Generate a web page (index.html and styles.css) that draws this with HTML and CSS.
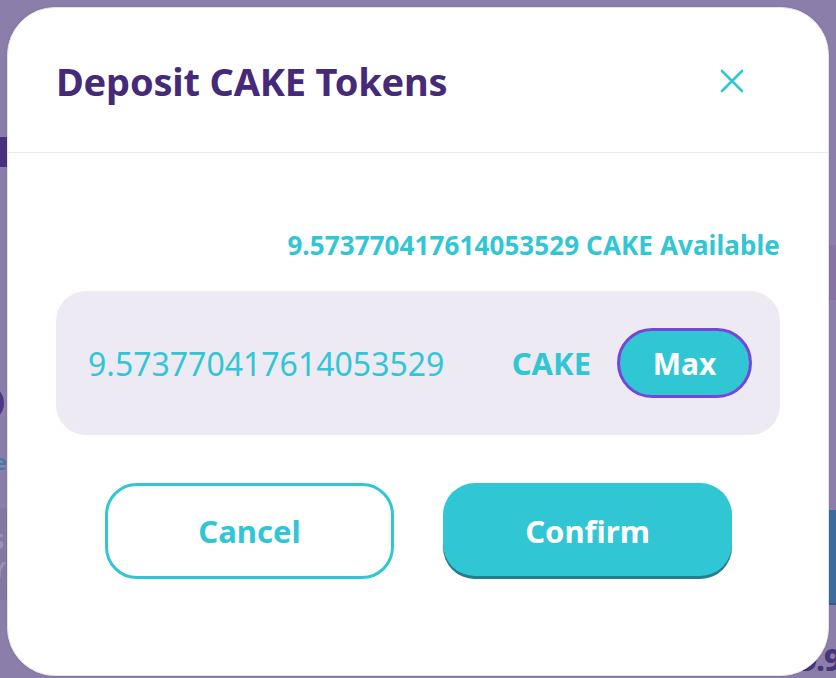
FILE: index.html
```html
<!DOCTYPE html>
<html lang="en">
<head>
<meta charset="utf-8">
<title>Deposit CAKE Tokens</title>
<link rel="stylesheet" href="styles.css">
</head>
<body>
<div class="backdrop" aria-hidden="true">
  <div class="bg-band-left"></div>
  <div class="bg-dot-left"></div>
  <div class="bg-e-left">e</div>
  <div class="bg-card-left"><span>S</span><span>Y</span></div>
  <div class="bg-band-right"></div>
  <div class="bg-card-right"></div>
  <div class="bg-num-right">9.9</div>
</div>
<div class="modal">
  <div class="modal-header">
    <h2 class="modal-title">Deposit CAKE Tokens</h2>
    <button class="close-btn" aria-label="Close">
      <svg width="24" height="24" viewBox="0 0 24 24"><path d="M2 2 L22 22 M22 2 L2 22" stroke="#31c6d4" stroke-width="2.6" stroke-linecap="round" fill="none"/></svg>
    </button>
  </div>
  <div class="modal-body">
    <div class="available">9.573770417614053529 CAKE Available</div>
    <div class="input-box">
      <span class="input-value">9.573770417614053529</span>
      <span class="input-unit">CAKE</span>
      <button class="max-btn">Max</button>
    </div>
    <div class="actions">
      <button class="btn btn-outline">Cancel</button>
      <button class="btn btn-solid">Confirm</button>
    </div>
  </div>
</div>
</body>
</html>
```
FILE: styles.css
```css
* { box-sizing: border-box; }
html, body { margin: 0; height: 100%; }
body {
  background: #8c7eab;
  font-family: "Noto Sans", "Open Sans", sans-serif;
  padding: 7px 7px 0 7px;
  position: relative;
  overflow: hidden;
}
.backdrop { position: absolute; inset: 0; z-index: 0; }
.bg-band-left { position: absolute; left: 0; top: 137px; width: 10px; height: 30px; background: #48307e; }
.bg-dot-left { position: absolute; left: -30px; top: 385px; width: 34px; height: 36px; border-radius: 50%; background: #4b3786; }
.bg-e-left { position: absolute; left: -6px; top: 446px; font-size: 22px; line-height: 30px; color: #3f79aa; font-weight: 600; }
.bg-card-left { position: absolute; left: 0; top: 508px; width: 10px; height: 92px; background: #8478a0; color: #9b92b3; font-size: 22px; font-weight: 700; display: flex; flex-direction: column; padding-top: 18px; line-height: 28px; }
.bg-card-left span { margin-left: -8px; }
.bg-band-right { position: absolute; right: 0; top: 245px; width: 10px; height: 55px; background: #8774a4; }
.bg-card-right { position: absolute; right: 0; top: 510px; width: 12px; height: 95px; background: #3d6b9c; border-bottom: 2px solid #36598a; }
.bg-num-right { position: absolute; left: 800px; top: 640px; font-size: 30px; line-height: 40px; font-weight: 800; color: #473579; letter-spacing: -1px; }

.modal {
  position: relative;
  z-index: 1;
  width: 822px;
  height: 669px;
  background: #fff;
  border: 1px solid #e4e2ea;
  border-radius: 48px;
  box-shadow: 0 0 2px rgba(0,0,0,0.15);
  display: flex;
  flex-direction: column;
}
.modal-header {
  height: 145px;
  border-bottom: 1px solid #e9eaeb;
  display: flex;
  align-items: center;
  justify-content: space-between;
  padding: 0 84px 0 48px;
}
.modal-title {
  margin: 0;
  font-size: 38px;
  line-height: 44px;
  font-weight: 700;
  color: #452a7a;
  letter-spacing: -0.2px;
  padding-top: 2px;
}
.close-btn {
  width: 24px; height: 24px;
  padding: 0; border: 0; background: none;
  display: flex; align-items: center; justify-content: center;
  margin-top: 2px;
}
.modal-body {
  padding: 76px 48px 0 48px;
  display: flex;
  flex-direction: column;
}
.available {
  text-align: right;
  font-size: 26px;
  line-height: 32px;
  font-weight: 700;
  color: #31c6d4;
  letter-spacing: 0.1px;
}
.input-box {
  margin-top: 30px;
  height: 144px;
  background: #eeeaf4;
  border-radius: 30px;
  display: flex;
  align-items: center;
  padding: 0 28px 0 32px;
}
.input-value {
  flex: 1;
  font-size: 32px;
  color: #31c6d4;
  font-weight: 400;
}
.input-unit {
  font-size: 31px;
  font-weight: 700;
  color: #31c6d4;
  margin-right: 26px;
}
.max-btn {
  width: 135px;
  height: 70px;
  border: 3px solid #7645d9;
  border-radius: 35px;
  background: #31c6d4;
  color: #fff;
  font-family: inherit;
  font-size: 30px;
  font-weight: 700;
}
.actions {
  margin-top: 48px;
  padding: 0 48px 0 49px;
  display: grid;
  grid-template-columns: 1fr 1fr;
  gap: 49px;
}
.btn {
  height: 96px;
  border-radius: 32px;
  font-family: inherit;
  font-size: 31px;
  font-weight: 700;
}
.btn-outline {
  background: #fff;
  border: 3px solid #31c6d4;
  color: #31c6d4;
}
.btn-solid {
  background: #31c6d4;
  border: 0;
  color: #fff;
  box-shadow: inset 0 -3px 0 rgba(14,14,44,0.4);
}
```
